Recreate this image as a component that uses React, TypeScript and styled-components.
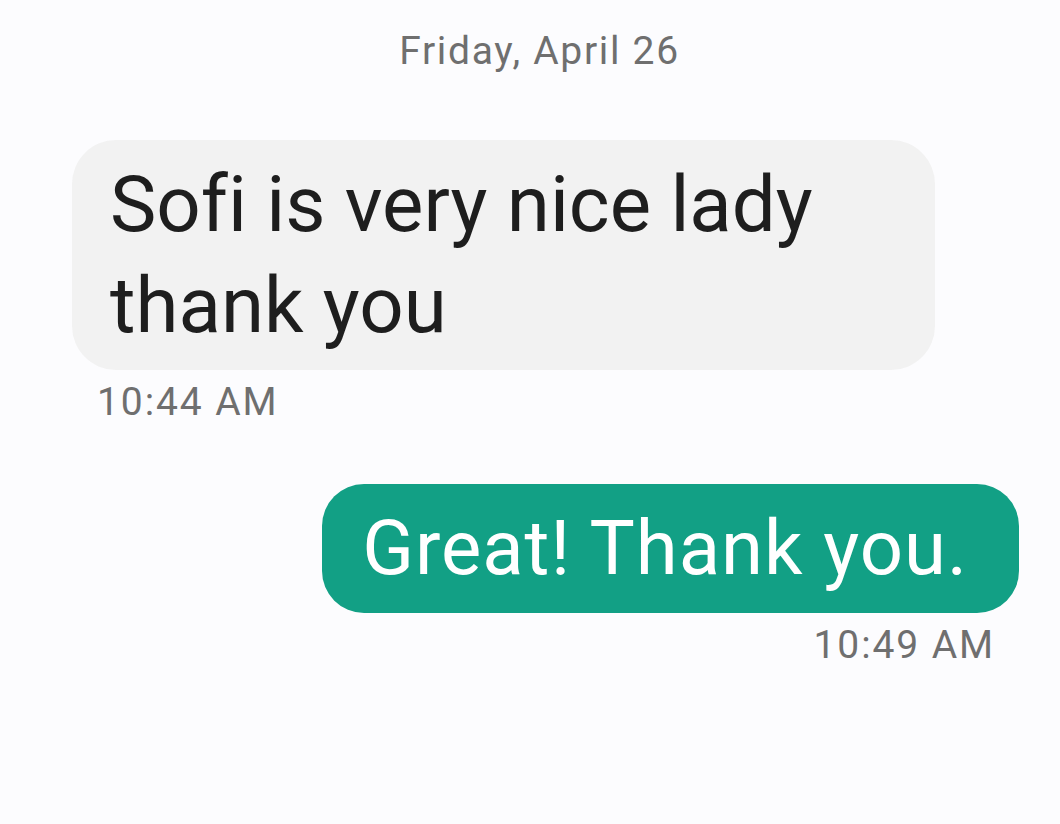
import React from "react";
import styled, { createGlobalStyle } from "styled-components";

const Global = createGlobalStyle`
  html, body { margin: 0; padding: 0; background: #fcfcfe; }
  body {
    font-family: Roboto, "Noto Sans", sans-serif;
    font-variant-ligatures: none;
  }
`;

const Page = styled.div`
  width: 1060px;
  height: 824px;
  box-sizing: border-box;
  display: flex;
  flex-direction: column;
  padding: 26px 41px 0 72px;
  background: #fcfcfe;
`;

const DateLabel = styled.div`
  text-align: center;
  font-size: 39px;
  line-height: 50px;
  letter-spacing: 1.7px;
  color: #6f6f6f;
  margin-left: -12px;
  margin-bottom: 64px;
`;

const Group = styled.div<{ $mine?: boolean }>`
  display: flex;
  flex-direction: column;
  align-items: ${(p) => (p.$mine ? "flex-end" : "flex-start")};
  margin-bottom: ${(p) => (p.$mine ? "0" : "58px")};
`;

const Bubble = styled.div<{ $mine?: boolean }>`
  box-sizing: border-box;
  max-width: ${(p) => (p.$mine ? "760px" : "863px")};
  width: ${(p) => (p.$mine ? "auto" : "863px")};
  padding: ${(p) => (p.$mine ? "14px 51px 14px 40px" : "14px 40px 14px 38px")};
  border-radius: ${(p) => (p.$mine ? "42px" : "44px")};
  background: ${(p) => (p.$mine ? "#12a085" : "#f2f2f2")};
  color: ${(p) => (p.$mine ? "#ffffff" : "#1e1e1e")};
  font-size: ${(p) => (p.$mine ? "76px" : "78px")};
  letter-spacing: ${(p) => (p.$mine ? "1px" : "0")};
  line-height: 101px;
`;

const Time = styled.div<{ $mine?: boolean }>`
  font-size: 39px;
  line-height: 48px;
  letter-spacing: 1.9px;
  color: #6f6f6f;
  margin-top: 8px;
  padding: ${(p) => (p.$mine ? "0 24px 0 0" : "0 0 0 25px")};
`;

export default function App() {
  return (
    <>
      <Global />
      <Page>
        <DateLabel>Friday, April 26</DateLabel>
        <Group>
          <Bubble>Sofi is very nice lady thank you</Bubble>
          <Time>10:44 AM</Time>
        </Group>
        <Group $mine>
          <Bubble $mine>Great! Thank you.</Bubble>
          <Time $mine>10:49 AM</Time>
        </Group>
      </Page>
    </>
  );
}
